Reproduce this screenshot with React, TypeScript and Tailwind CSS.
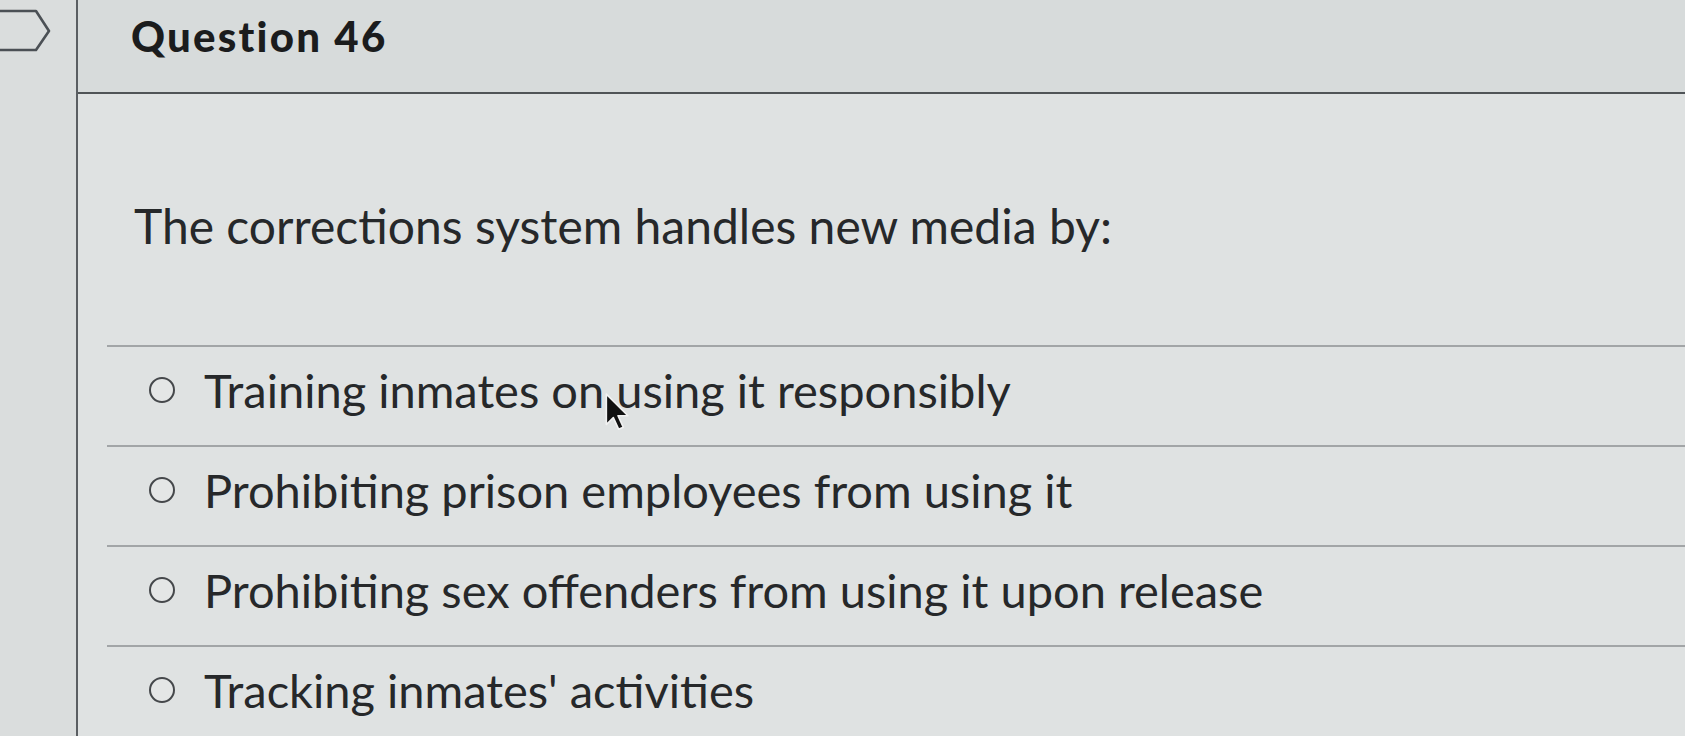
import React from 'react'

const options = [
  'Training inmates on using it responsibly',
  'Prohibiting prison employees from using it',
  'Prohibiting sex offenders from using it upon release',
  "Tracking inmates' activities",
]

function Radio() {
  return (
    <span className="w-[26px] h-[26px] shrink-0 rounded-full border-[2px] border-[#45484b] bg-[#e4e6e6]" />
  )
}

function Cursor() {
  return (
    <svg
      className="absolute left-[604px] top-[393px] pointer-events-none"
      width="28"
      height="42"
      viewBox="0 0 24 36"
    >
      <path
        d="M2 1 L2 27 L8 21 L12.5 31 L16.5 29.3 L12 19.5 L20.5 19.5 Z"
        fill="#111"
        stroke="#f2f2f2"
        strokeWidth="1.4"
        strokeLinejoin="round"
      />
    </svg>
  )
}

export default function App() {
  return (
    <div
      className="relative w-[1685px] h-[736px] overflow-hidden flex bg-[#dfe2e2] text-[#26282a]"
      style={{ fontFamily: 'Lato, "Noto Sans", sans-serif' }}
    >
      {/* left rail with bookmark tab */}
      <aside className="w-[78px] shrink-0 border-r-2 border-[#5a5e62] bg-[#dadddd]">
        <svg width="54" height="60" viewBox="0 0 54 60" className="block">
          <path
            d="M-2 11 H36 L49 31 L36 50 H-2"
            fill="none"
            stroke="#4b5055"
            strokeWidth="2.6"
            strokeLinejoin="round"
          />
        </svg>
      </aside>

      <main className="flex-1 flex flex-col">
        <header className="h-[94px] shrink-0 border-b-2 border-[#505457] bg-[#d7dbdb] pl-[53px] pt-[10px]">
          <h1 className="text-[42px] leading-[52px] font-black tracking-[2.2px] text-[#1b1c1d]">
            Question 46
          </h1>
        </header>

        <div className="pl-[56px] pt-[103px]">
          <p className="text-[48px] leading-[58px]">The corrections system handles new media by:</p>
        </div>

        <ul className="ml-[29px] mt-[90px]">
          {options.map((label) => (
            <li
              key={label}
              className="border-t-2 border-[#a2a5a7] pl-[42px] pt-[15px] pb-[27px]"
            >
              <label className="flex items-center gap-[29px] h-[56px] text-[47px] leading-[56px]">
                <Radio />
                <span>{label}</span>
              </label>
            </li>
          ))}
        </ul>
      </main>

      <Cursor />
    </div>
  )
}
